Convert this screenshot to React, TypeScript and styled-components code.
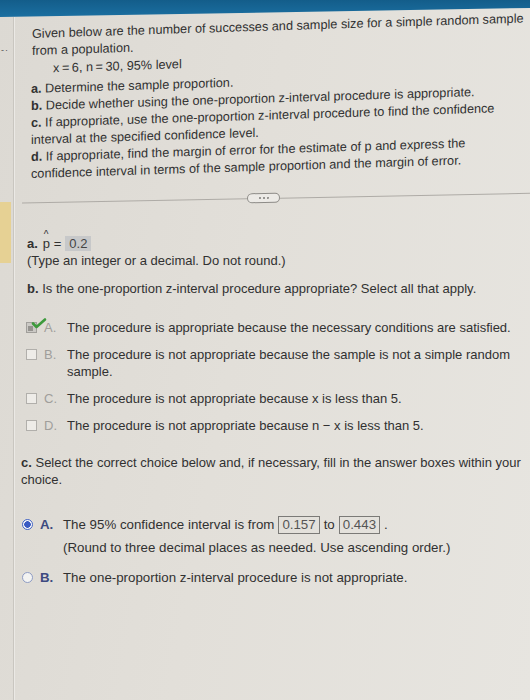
import React from "react";
import styled, { createGlobalStyle } from "styled-components";

const Global = createGlobalStyle`
  html, body { margin: 0; padding: 0; }
  body {
    width: 530px;
    height: 700px;
    overflow: hidden;
    background: #e2dfd9;
    font-family: "Liberation Sans", Arial, sans-serif;
    color: #313131;
  }
`;

const Page = styled.div`
  width: 530px;
  height: 700px;
  display: flex;
  flex-direction: column;
  background: linear-gradient(100deg, #dcd9d3 0%, #e2dfd9 45%, #e7e5e0 100%);
`;

const TopBar = styled.div`
  flex: none;
  height: 17px;
  background: linear-gradient(180deg, #135d8a 0%, #1b6fa1 100%);
  clip-path: polygon(0 0, 100% 0, 100% 8px, 0 17px);
`;

const Main = styled.div`
  flex: 1;
  display: flex;
`;

const Gutter = styled.div`
  flex: none;
  width: 13px;
  border-right: 1px solid #c9c6c0;
  box-shadow: 1px 0 0 #ebe9e5;
  display: flex;
  flex-direction: column;
`;

const GutterMark = styled.div`
  margin-top: 28px;
  height: 10px;
  line-height: 10px;
  font-size: 9px;
  color: #555;
  padding-left: 1px;
  letter-spacing: 1px;
`;

const YellowTab = styled.div`
  margin-top: 147px;
  width: 11px;
  height: 61px;
  background: #e6d194;
`;

const Content = styled.div`
  flex: 1;
  display: flex;
  flex-direction: column;
  font-size: 13px;
  line-height: 17px;
`;

const ProblemBlock = styled.div`
  margin-top: 9px;
  padding-left: 17px;
  font-size: 12.7px;
  transform: skewY(-1.8deg);
  transform-origin: 17px 0;
`;

const Line = styled.p<{ $indent?: number; $gap?: number }>`
  margin: ${(p) => p.$gap ?? 0}px 0 0 ${(p) => p.$indent ?? 0}px;
  white-space: nowrap;
`;

const Part = styled.b`
  font-weight: 700;
`;

const DividerRow = styled.div`
  margin-top: 9px;
  margin-left: 8px;
  height: 12px;
  display: flex;
  align-items: center;
  transform: skewY(-1.1deg);
  transform-origin: 240px 50%;
`;

const Rule = styled.div<{ $w?: number }>`
  height: 0;
  border-top: 1px solid #aeaba6;
  ${(p) => (p.$w ? `width: ${p.$w}px; flex: none;` : `flex: 1;`)}
`;

const Pill = styled.div`
  flex: none;
  width: 31px;
  height: 8px;
  border: 1px solid #8d8b87;
  border-radius: 5px;
  background: #eceae6;
  display: flex;
  align-items: center;
  justify-content: center;
  gap: 2px;
`;

const Dot = styled.span`
  width: 2px;
  height: 2px;
  border-radius: 50%;
  background: #7d7b78;
`;

const Section = styled.div<{ $left: number; $top: number; $size?: number }>`
  margin-top: ${(p) => p.$top}px;
  padding-left: ${(p) => p.$left}px;
  display: flex;
  flex-direction: column;
  ${(p) => (p.$size ? `font-size: ${p.$size}px;` : "")}
`;

const Hat = styled.span`
  position: relative;
  display: inline-block;
  margin-left: 5px;
  &::before {
    content: "^";
    position: absolute;
    left: 1px;
    top: -9px;
    font-size: 10px;
  }
`;

const FilledAnswer = styled.span`
  display: inline-block;
  margin-left: 4px;
  padding: 0 4px;
  line-height: 15px;
  background: #c7c8c9;
  color: #444;
`;

const OptionList = styled.div`
  margin-top: 22px;
  display: flex;
  flex-direction: column;
  gap: 10px;
`;

const Option = styled.div`
  display: grid;
  grid-template-columns: 11px 16px 1fr;
  column-gap: 7px;
  align-items: start;
`;

const Box = styled.span<{ $checked?: boolean }>`
  position: relative;
  margin-top: 3px;
  width: 9px;
  height: 9px;
  border: 1px solid ${(p) => (p.$checked ? "#a19f9b" : "#b1afab")};
  background: ${(p) => (p.$checked ? "#cbc9c5" : "#eeece8")};
  ${(p) =>
    p.$checked
      ? `&::after { content: ""; position: absolute; left: 1px; bottom: 1px; width: 5px; height: 5px; background: #95938f; }`
      : ""}
`;

const Check = styled.svg`
  position: absolute;
  left: 5px;
  top: -4px;
  width: 14px;
  height: 9px;
  overflow: visible;
`;

const GrayLetter = styled.span`
  color: #a09e9b;
`;

const RadioList = styled.div`
  margin-top: 26px;
  display: flex;
  flex-direction: column;
  gap: 13px;
  font-size: 13.3px;
`;

const RadioOption = styled.div`
  display: grid;
  grid-template-columns: 11px 16px 1fr;
  column-gap: 7px;
  align-items: start;
  margin-left: 1px;
`;

const Radio = styled.span<{ $on?: boolean; $tall?: boolean }>`
  margin-top: ${(p) => (p.$tall ? 5 : 3)}px;
  width: 9px;
  height: 9px;
  border-radius: 50%;
  border: 1.5px solid ${(p) => (p.$on ? "#4466c6" : "#8e9cc4")};
  background: ${(p) =>
    p.$on
      ? "radial-gradient(circle, #3a5bc3 0 3px, #f7f7f7 3.6px)"
      : "#f3f3f2"};
`;

const BlueLetter = styled.b<{ $tall?: boolean }>`
  color: #3d4a80;
  line-height: ${(p) => (p.$tall ? 22 : 17)}px;
`;

const RadioBody = styled.div`
  display: flex;
  flex-direction: column;
`;

const FirstRow = styled.div`
  height: 22px;
  display: flex;
  align-items: center;
  white-space: nowrap;
`;

const Note = styled.div`
  margin-top: 3.5px;
`;

const InputBox = styled.span`
  display: inline-block;
  height: 16px;
  line-height: 16px;
  padding: 0 3px;
  border: 1px solid #7b7a77;
  color: #555;
  margin: 0 4px;
`;

export default function App() {
  return (
    <>
      <Global />
      <Page>
        <TopBar />
        <Main>
          <Gutter>
            <GutterMark>-·</GutterMark>
            <YellowTab />
          </Gutter>
          <Content>
            <ProblemBlock>
              <Line $indent={1}>
                Given below are the number of successes and sample size for a simple random sample
              </Line>
              <Line $indent={1}>from a population.</Line>
              <Line $indent={22} $gap={1}>
                x{"\u2009"}={"\u2009"}6, n{"\u2009"}={"\u2009"}30, 95% level
              </Line>
              <Line $gap={3}>
                <Part>a.</Part> Determine the sample proportion.
              </Line>
              <Line>
                <Part>b.</Part> Decide whether using the one-proportion z-interval procedure is appropriate.
              </Line>
              <Line>
                <Part>c.</Part> If appropriate, use the one-proportion z-interval procedure to find the confidence
              </Line>
              <Line>interval at the specified confidence level.</Line>
              <Line>
                <Part>d.</Part> If appropriate, find the margin of error for the estimate of p and express the
              </Line>
              <Line>confidence interval in terms of the sample proportion and the margin of error.</Line>
            </ProblemBlock>

            <DividerRow>
              <Rule $w={225} />
              <Pill>
                <Dot />
                <Dot />
                <Dot />
              </Pill>
              <Rule />
            </DividerRow>

            <Section $left={13} $top={30.5}>
              <Line>
                <Part>a.</Part>
                <Hat>p</Hat> =<FilledAnswer>0.2</FilledAnswer>
              </Line>
              <Line>(Type an integer or a decimal. Do not round.)</Line>
              <Line $gap={11}>
                <Part>b.</Part> Is the one-proportion z-interval procedure appropriate? Select all that apply.
              </Line>
            </Section>

            <Section $left={12} $top={0}>
              <OptionList>
                <Option>
                  <Box $checked>
                    <Check viewBox="0 0 14 9">
                      <path d="M1 4.5 L4.5 8 L13 0.5" fill="none" stroke="#3d9a3c" strokeWidth="2.6" strokeLinecap="round" strokeLinejoin="round" />
                    </Check>
                  </Box>
                  <GrayLetter>A.</GrayLetter>
                  <span>The procedure is appropriate because the necessary conditions are satisfied.</span>
                </Option>
                <Option>
                  <Box />
                  <GrayLetter>B.</GrayLetter>
                  <span>The procedure is not appropriate because the sample is not a simple random sample.</span>
                </Option>
                <Option>
                  <Box />
                  <GrayLetter>C.</GrayLetter>
                  <span>The procedure is not appropriate because x is less than 5.</span>
                </Option>
                <Option>
                  <Box />
                  <GrayLetter>D.</GrayLetter>
                  <span>The procedure is not appropriate because n {"\u2212"} x is less than 5.</span>
                </Option>
              </OptionList>
            </Section>

            <Section $left={7} $top={20}>
              <Line>
                <Part>c.</Part> Select the correct choice below and, if necessary, fill in the answer boxes within your
              </Line>
              <Line>choice.</Line>
              <RadioList>
                <RadioOption>
                  <Radio $on $tall />
                  <BlueLetter $tall>A.</BlueLetter>
                  <RadioBody>
                    <FirstRow>
                      The 95% confidence interval is from<InputBox>0.157</InputBox>to<InputBox>0.443</InputBox>.
                    </FirstRow>
                    <Note>(Round to three decimal places as needed. Use ascending order.)</Note>
                  </RadioBody>
                </RadioOption>
                <RadioOption>
                  <Radio />
                  <BlueLetter>B.</BlueLetter>
                  <span>The one-proportion z-interval procedure is not appropriate.</span>
                </RadioOption>
              </RadioList>
            </Section>
          </Content>
        </Main>
      </Page>
    </>
  );
}
